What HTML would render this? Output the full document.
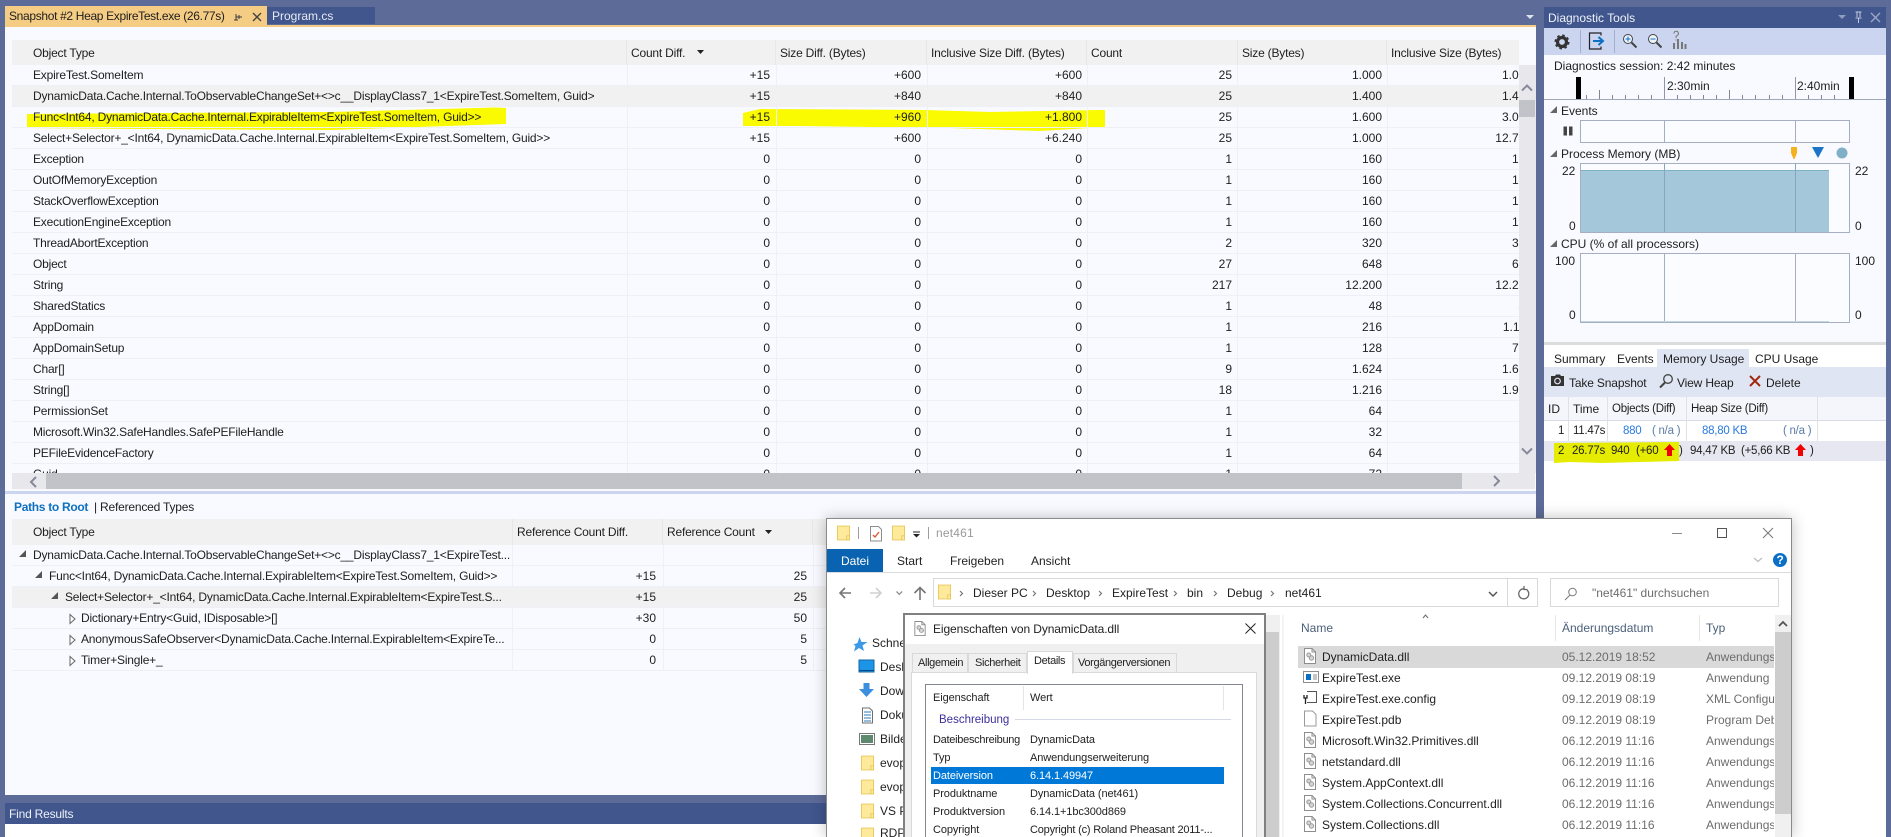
<!DOCTYPE html>
<html lang="en"><head><meta charset="utf-8"><title>Snapshot Heap</title>
<style>
html,body{margin:0;padding:0;width:1891px;height:837px;overflow:hidden;background:#5d6b99;font:12px "Liberation Sans",sans-serif;color:#1e1e1e}
div,span,svg{box-sizing:border-box}
#p{position:relative;width:1891px;height:837px;overflow:hidden;background:#5d6b99}
.b{position:absolute}
.t{position:absolute;white-space:nowrap;line-height:14px}
svg{position:absolute;overflow:visible}
.r{position:absolute;left:12px;width:1507px;height:21px;overflow:hidden;border-bottom:1px solid #eef0f6}
.r span{position:absolute;top:0;line-height:21px;white-space:nowrap}
.r .a{left:21px;letter-spacing:-.2px}.c1{right:749px}.c2{right:598px}.c3{right:437px}.c4{right:287px}.c5{right:137px}.c6{right:-13px}
.v{position:absolute;width:1px;background:#eef0f6}
.h{position:absolute;top:40px;height:25px;background:#f1f1f1;line-height:26px;white-space:nowrap;border-right:1px solid #e6e7ee;padding-left:4px;letter-spacing:-.2px}
.s{position:absolute;left:12px;width:814px;height:21px;border-bottom:1px solid #eef0f6}
.s span{position:absolute;top:0;line-height:20px;white-space:nowrap}
.s span:first-child{letter-spacing:-.2px}
.c{color:#6d6d6d}
.e{color:#222}
.d{font-size:11px;letter-spacing:-.1px}
.g{font-size:11.5px;letter-spacing:-.25px}
.k{font-size:11px;letter-spacing:-.35px}
</style></head><body><div id="p">

<!-- VS tab strip -->
<div class="b" style="left:5px;top:6px;width:262px;height:20px;background:#f5cc84"></div>
<div class="t" style="left:9px;top:9px;letter-spacing:-.33px">Snapshot #2 Heap ExpireTest.exe (26.77s)</div>
<svg style="left:233px;top:12px" width="10" height="10"><path d="M3 2v6M3 5h6M1 8h4M6 3v4" stroke="#3b3b3b" fill="none"/></svg>
<svg style="left:252px;top:12px" width="10" height="10"><path d="M1 1l8 8M9 1l-8 8" stroke="#444" stroke-width="1.4" fill="none"/></svg>
<div class="b" style="left:267px;top:7px;width:108px;height:17px;background:#40568d"></div>
<div class="t" style="left:272px;top:9px;color:#e6e9f3">Program.cs</div>
<svg style="left:1526px;top:15px" width="9" height="5"><path d="M0 0h8l-4 4z" fill="#dfe3f0"/></svg>
<div class="b" style="left:5px;top:25px;width:1531px;height:2px;background:#f5cc84"></div>

<!-- Main pane -->
<div class="b" style="left:5px;top:27px;width:1531px;height:768px;background:#f9faff"></div>

<svg style="left:0;top:0" width="1200" height="140"><path d="M27 114L160 113L330 112L495 107.500L506 108L506 124L330 130L150 129L27 128z" fill="#fafa00"/><path d="M743 113L760 109L925 110L990 112L1100 110L1105 110L1105 127L1040 131L950 128L800 126L743 126z" fill="#fafa00"/></svg>

<div class="b" style="left:12px;top:86px;width:1507px;height:21px;background:#f1f1f1"></div>

<div class="h" style="left:12px;width:615px;padding-left:21px">Object Type</div>
<div class="h" style="left:627px;width:149px">Count Diff.</div>
<svg style="left:697px;top:50px" width="8" height="5"><path d="M0 0h7l-3.500 4z" fill="#222"/></svg>
<div class="h" style="left:776px;width:151px">Size Diff. (Bytes)</div>
<div class="h" style="left:927px;width:160px">Inclusive Size Diff. (Bytes)</div>
<div class="h" style="left:1087px;width:151px">Count</div>
<div class="h" style="left:1238px;width:149px">Size (Bytes)</div>
<div class="h" style="left:1387px;width:132px;border-right:0">Inclusive Size (Bytes)</div>

<div class="v" style="left:627px;top:65px;height:408px"></div>
<div class="v" style="left:776px;top:65px;height:408px"></div>
<div class="v" style="left:927px;top:65px;height:408px"></div>
<div class="v" style="left:1087px;top:65px;height:408px"></div>
<div class="v" style="left:1237px;top:65px;height:408px"></div>
<div class="v" style="left:1387px;top:65px;height:408px"></div>

<div class="r" style="top:65px"><span class="a">ExpireTest.SomeItem</span><span class="c1">+15</span><span class="c2">+600</span><span class="c3">+600</span><span class="c4">25</span><span class="c5">1.000</span><span class="c6">1.000</span></div>
<div class="r" style="top:86px"><span class="a">DynamicData.Cache.Internal.ToObservableChangeSet+&lt;&gt;c__DisplayClass7_1&lt;ExpireTest.SomeItem, Guid&gt;</span><span class="c1">+15</span><span class="c2">+840</span><span class="c3">+840</span><span class="c4">25</span><span class="c5">1.400</span><span class="c6">1.400</span></div>
<div class="r" style="top:107px"><span class="a">Func&lt;Int64, DynamicData.Cache.Internal.ExpirableItem&lt;ExpireTest.SomeItem, Guid&gt;&gt;</span><span class="c1">+15</span><span class="c2">+960</span><span class="c3">+1.800</span><span class="c4">25</span><span class="c5">1.600</span><span class="c6">3.000</span></div>
<div class="r" style="top:128px"><span class="a">Select+Selector+_&lt;Int64, DynamicData.Cache.Internal.ExpirableItem&lt;ExpireTest.SomeItem, Guid&gt;&gt;</span><span class="c1">+15</span><span class="c2">+600</span><span class="c3">+6.240</span><span class="c4">25</span><span class="c5">1.000</span><span class="c6">12.720</span></div>
<div class="r" style="top:149px"><span class="a">Exception</span><span class="c1">0</span><span class="c2">0</span><span class="c3">0</span><span class="c4">1</span><span class="c5">160</span><span class="c6">160</span></div>
<div class="r" style="top:170px"><span class="a">OutOfMemoryException</span><span class="c1">0</span><span class="c2">0</span><span class="c3">0</span><span class="c4">1</span><span class="c5">160</span><span class="c6">160</span></div>
<div class="r" style="top:191px"><span class="a">StackOverflowException</span><span class="c1">0</span><span class="c2">0</span><span class="c3">0</span><span class="c4">1</span><span class="c5">160</span><span class="c6">160</span></div>
<div class="r" style="top:212px"><span class="a">ExecutionEngineException</span><span class="c1">0</span><span class="c2">0</span><span class="c3">0</span><span class="c4">1</span><span class="c5">160</span><span class="c6">160</span></div>
<div class="r" style="top:233px"><span class="a">ThreadAbortException</span><span class="c1">0</span><span class="c2">0</span><span class="c3">0</span><span class="c4">2</span><span class="c5">320</span><span class="c6">320</span></div>
<div class="r" style="top:254px"><span class="a">Object</span><span class="c1">0</span><span class="c2">0</span><span class="c3">0</span><span class="c4">27</span><span class="c5">648</span><span class="c6">648</span></div>
<div class="r" style="top:275px"><span class="a">String</span><span class="c1">0</span><span class="c2">0</span><span class="c3">0</span><span class="c4">217</span><span class="c5">12.200</span><span class="c6">12.200</span></div>
<div class="r" style="top:296px"><span class="a">SharedStatics</span><span class="c1">0</span><span class="c2">0</span><span class="c3">0</span><span class="c4">1</span><span class="c5">48</span><span class="c6">48</span></div>
<div class="r" style="top:317px"><span class="a">AppDomain</span><span class="c1">0</span><span class="c2">0</span><span class="c3">0</span><span class="c4">1</span><span class="c5">216</span><span class="c6">1.116</span></div>
<div class="r" style="top:338px"><span class="a">AppDomainSetup</span><span class="c1">0</span><span class="c2">0</span><span class="c3">0</span><span class="c4">1</span><span class="c5">128</span><span class="c6">728</span></div>
<div class="r" style="top:359px"><span class="a">Char[]</span><span class="c1">0</span><span class="c2">0</span><span class="c3">0</span><span class="c4">9</span><span class="c5">1.624</span><span class="c6">1.624</span></div>
<div class="r" style="top:380px"><span class="a">String[]</span><span class="c1">0</span><span class="c2">0</span><span class="c3">0</span><span class="c4">18</span><span class="c5">1.216</span><span class="c6">1.916</span></div>
<div class="r" style="top:401px"><span class="a">PermissionSet</span><span class="c1">0</span><span class="c2">0</span><span class="c3">0</span><span class="c4">1</span><span class="c5">64</span><span class="c6">64</span></div>
<div class="r" style="top:422px"><span class="a">Microsoft.Win32.SafeHandles.SafePEFileHandle</span><span class="c1">0</span><span class="c2">0</span><span class="c3">0</span><span class="c4">1</span><span class="c5">32</span><span class="c6">32</span></div>
<div class="r" style="top:443px"><span class="a">PEFileEvidenceFactory</span><span class="c1">0</span><span class="c2">0</span><span class="c3">0</span><span class="c4">1</span><span class="c5">64</span><span class="c6">64</span></div>
<div class="r" style="top:464px;height:9px;border:0"><span class="a">Guid</span><span class="c1">0</span><span class="c2">0</span><span class="c3">0</span><span class="c4">1</span><span class="c5">72</span><span class="c6">92</span></div>

<!-- Scrollbars -->
<div class="b" style="left:1519px;top:65px;width:17px;height:408px;background:#e8e8ec"></div>
<div class="b" style="left:1519px;top:100px;width:16px;height:17px;background:#c2c3c9"></div>
<svg style="left:1521px;top:83px" width="12" height="9"><path d="M1 7.500L6 2.500L11 7.500" stroke="#868999" stroke-width="2" fill="none"/></svg>
<svg style="left:1521px;top:447px" width="12" height="9"><path d="M1 1.500L6 6.500L11 1.500" stroke="#868999" stroke-width="2" fill="none"/></svg>
<div class="b" style="left:12px;top:473px;width:1523px;height:16px;background:#e8e8ec"></div>
<div class="b" style="left:46px;top:473px;width:1416px;height:16px;background:#c2c3c9"></div>
<svg style="left:29px;top:476px" width="9" height="12"><path d="M7 1L2 6L7 11" stroke="#868999" stroke-width="2" fill="none"/></svg>
<svg style="left:1492px;top:475px" width="9" height="12"><path d="M2 1L7 6L2 11" stroke="#868999" stroke-width="2" fill="none"/></svg>
<div class="b" style="left:5px;top:491px;width:1531px;height:3px;background:#ccd5f0"></div>

<!-- Lower pane -->
<div class="t" style="left:14px;top:500px;color:#0e70c0;font-weight:bold;letter-spacing:-.3px">Paths to Root</div>
<div class="t" style="left:94px;top:500px;letter-spacing:-.2px">| Referenced Types</div>
<div class="h" style="left:12px;top:519px;height:26px;width:501px;padding-left:21px;line-height:27px">Object Type</div>
<div class="h" style="left:513px;top:519px;height:26px;width:150px;line-height:27px">Reference Count Diff.</div>
<div class="h" style="left:663px;top:519px;height:26px;width:150px;line-height:27px">Reference Count</div>
<div class="h" style="left:813px;top:519px;height:26px;width:20px;line-height:27px"></div>
<svg style="left:765px;top:530px" width="8" height="5"><path d="M0 0h7l-3.500 4z" fill="#222"/></svg>
<div class="b" style="left:12px;top:587px;width:814px;height:21px;background:#f1f1f1"></div>
<div class="s" style="top:545px"><span style="left:21px">DynamicData.Cache.Internal.ToObservableChangeSet+&lt;&gt;c__DisplayClass7_1&lt;ExpireTest...</span></div>
<div class="s" style="top:566px"><span style="left:37px">Func&lt;Int64, DynamicData.Cache.Internal.ExpirableItem&lt;ExpireTest.SomeItem, Guid&gt;&gt;</span><span style="right:170px">+15</span><span style="right:19px">25</span></div>
<div class="s" style="top:587px"><span style="left:53px">Select+Selector+_&lt;Int64, DynamicData.Cache.Internal.ExpirableItem&lt;ExpireTest.S...</span><span style="right:170px">+15</span><span style="right:19px">25</span></div>
<div class="s" style="top:608px"><span style="left:69px">Dictionary+Entry&lt;Guid, IDisposable&gt;[]</span><span style="right:170px">+30</span><span style="right:19px">50</span></div>
<div class="s" style="top:629px"><span style="left:69px">AnonymousSafeObserver&lt;DynamicData.Cache.Internal.ExpirableItem&lt;ExpireTe...</span><span style="right:170px">0</span><span style="right:19px">5</span></div>
<div class="s" style="top:650px"><span style="left:69px">Timer+Single+_</span><span style="right:170px">0</span><span style="right:19px">5</span></div>
<div class="v" style="left:512px;top:545px;height:125px"></div>
<div class="v" style="left:663px;top:545px;height:125px"></div>
<div class="v" style="left:813px;top:545px;height:125px"></div>
<svg style="left:0;top:540px" width="90" height="130">
<path d="M26 10v7h-7zM42 31v7h-7zM58 52v7h-7z" fill="#555"/>
<path d="M70 74.500v9l5-4.500zM70 95.500v9l5-4.500zM70 116.500v9l5-4.500z" fill="#fff" stroke="#666"/>
</svg>

<div class="b" style="left:0;top:795px;width:1536px;height:8px;background:#5d6b99"></div>
<div class="b" style="left:5px;top:803px;width:1531px;height:21px;background:#40568d"></div>
<div class="t" style="left:9px;top:807px;color:#eef1f8;letter-spacing:-.2px">Find Results</div>
<div class="b" style="left:5px;top:824px;width:1531px;height:13px;background:#fff"></div>

<!-- Diagnostic Tools -->
<div class="b" style="left:1544px;top:7px;width:342px;height:830px;background:#f9faff"></div>
<div class="b" style="left:1544px;top:7px;width:342px;height:21px;background:#40568d"></div>
<div class="t" style="left:1548px;top:11px;color:#eef1f8">Diagnostic Tools</div>
<svg style="left:1838px;top:12px" width="44" height="12">
<path d="M0 3h8l-4 4z" fill="#8f9cc0"/>
<path d="M19 0v5M22 0v5M17.500 6h6M20.500 6v5M17.500 0h6" stroke="#c3cbe0" fill="none"/>
<path d="M33 1l9 9M42 1l-9 9" stroke="#9ea9c8" stroke-width="1.300"/>
</svg>
<div class="b" style="left:1544px;top:28px;width:342px;height:27px;background:#ccd5f0"></div>
<svg style="left:1544px;top:28px" width="160" height="27">
<circle cx="18" cy="14" r="4.500" fill="none" stroke="#333" stroke-width="3.200"/>
<circle cx="18" cy="14" r="6.500" fill="none" stroke="#333" stroke-width="2" stroke-dasharray="2.500 2.600"/>
<path d="M36.500 2v23M70.500 2v23" stroke="#9fb0d0"/>
<path d="M57 7.500V5H45.500v16H57v-2.500" fill="none" stroke="#222" stroke-width="1.200"/>
<path d="M49 13h9M54.500 9l4.500 4-4.500 4" fill="none" stroke="#0e70c0" stroke-width="2"/>
<circle cx="84" cy="11" r="4.500" fill="#eef2fb" stroke="#444"/><path d="M87.500 14.500l5 5" stroke="#444" stroke-width="2"/><path d="M81.500 11h5M84 8.500v5" stroke="#0e70c0"/>
<circle cx="109" cy="11" r="4.500" fill="#eef2fb" stroke="#444"/><path d="M112.500 14.500l5 5" stroke="#444" stroke-width="2"/><path d="M106.500 11h5" stroke="#0e70c0"/>
<path d="M130 5.500a2.200 2.200 0 1 1 3 2l-1 1v1.500M132 11.500v1" fill="none" stroke="#777"/>
<path d="M129 15h2v6h-2zM133 11h2v10h-2zM137 14h2v7h-2zM140.500 16h2v5h-2z" fill="#777"/>
</svg>
<div class="t" style="left:1554px;top:59px">Diagnostics session: 2:42 minutes</div>

<svg style="left:1544px;top:77px" width="342" height="24">
<path d="M0 22.500h342" stroke="#a0a7b8"/>
<rect x="32" y="0" width="5" height="22" fill="#000"/><rect x="305" y="0" width="5" height="22" fill="#000"/>
<path d="M120.500 0v22M251.500 0v22" stroke="#8e96a8"/>
<path d="M42.500 18v4M55.500 13v9M68.500 18v4M81.500 18v4M94.500 18v4M107.500 18v4M133.500 18v4M146.500 18v4M159.500 18v4M172.500 18v4M185.500 13v9M198.500 18v4M211.500 18v4M225.500 18v4M238.500 18v4M264.500 18v4M277.500 18v4M290.500 18v4" stroke="#7f8594"/>
</svg>
<div class="t" style="left:1667px;top:79px">2:30min</div>
<div class="t" style="left:1797px;top:79px">2:40min</div>

<svg style="left:1544px;top:100px" width="342" height="240">
<path d="M13 6v7h-7zM13 50v7h-7zM13 140v7h-7z" fill="#666"/>
<rect x="36.500" y="20.500" width="269" height="22" fill="#fbfcff" stroke="#a6afc1"/>
<path d="M120.500 20v22M251.500 20v22" stroke="#a6afc1"/>
<path d="M19.500 26.500h3.500v9h-3.500zM25 26.500h3.500v9H25z" fill="#444"/>
<rect x="36.500" y="63.500" width="269" height="69" fill="#fbfcff" stroke="#a6afc1"/>
<rect x="37" y="70" width="248" height="62" fill="#a4c7da"/>
<path d="M37 70.500h248" stroke="#7fb0c8"/>
<path d="M120.500 63v69M251.500 63v69" stroke="#88a6bd"/>
<path d="M247 47h6v6l-2.500 6h-1l-2.500-6z" fill="#f5b21f"/>
<path d="M268 47h12l-6 11z" fill="#1b74c6"/>
<circle cx="298" cy="53" r="5.500" fill="#7fb0c8"/>
<rect x="36.500" y="153.500" width="269" height="69" fill="#fbfcff" stroke="#a6afc1"/>
<path d="M120.500 153v69M251.500 153v69" stroke="#a6afc1"/>
<path d="M37 221.500h248" stroke="#c3d6e2"/>
</svg>
<div class="t" style="left:1561px;top:104px">Events</div>
<div class="t" style="left:1561px;top:147px">Process Memory (MB)</div>
<div class="t" style="left:1561px;top:237px">CPU (% of all processors)</div>
<div class="t" style="left:1562px;top:164px">22</div><div class="t" style="left:1855px;top:164px">22</div>
<div class="t" style="left:1569px;top:219px">0</div><div class="t" style="left:1855px;top:219px">0</div>
<div class="t" style="left:1555px;top:254px">100</div><div class="t" style="left:1855px;top:254px">100</div>
<div class="t" style="left:1569px;top:308px">0</div><div class="t" style="left:1855px;top:308px">0</div>

<div class="b" style="left:1544px;top:342px;width:342px;height:3px;background:#dcdcdc"></div>
<div class="b" style="left:1544px;top:345px;width:342px;height:492px;background:#fff"></div>
<div class="b" style="left:1657px;top:349px;width:92px;height:18px;background:#dfe5f2"></div>
<div class="t" style="left:1554px;top:352px">Summary</div>
<div class="t" style="left:1617px;top:352px">Events</div>
<div class="t" style="left:1663px;top:352px">Memory Usage</div>
<div class="t" style="left:1755px;top:352px">CPU Usage</div>
<div class="b" style="left:1544px;top:367px;width:342px;height:30px;background:#dfe5f2"></div>
<svg style="left:1550px;top:372px" width="220" height="20">
<path d="M1 4h4l1-1.500h4L11 4h3v10H1z" fill="#333"/><circle cx="7.500" cy="9" r="2.800" fill="none" stroke="#dfe5f2" stroke-width="1.200"/>
<circle cx="118" cy="7" r="4.300" fill="none" stroke="#444" stroke-width="1.300"/><path d="M115 10.500l-5 5" stroke="#444" stroke-width="2"/>
<path d="M200 4l10 10M210 4l-10 10" stroke="#a1260d" stroke-width="2"/>
</svg>
<div class="t" style="left:1569px;top:376px;letter-spacing:-.15px">Take Snapshot</div>
<div class="t" style="left:1677px;top:376px;letter-spacing:-.15px">View Heap</div>
<div class="t" style="left:1766px;top:376px">Delete</div>
<div class="b" style="left:1544px;top:397px;width:342px;height:24px;background:#f5f6fb;border-bottom:1px solid #d9dbe2"></div>
<div class="b" style="left:1568px;top:397px;width:1px;height:64px;background:#dfe1e8"></div>
<div class="b" style="left:1607px;top:397px;width:1px;height:64px;background:#dfe1e8"></div>
<div class="b" style="left:1686px;top:397px;width:1px;height:64px;background:#dfe1e8"></div>
<div class="b" style="left:1817px;top:397px;width:1px;height:64px;background:#dfe1e8"></div>
<div class="t" style="left:1548px;top:402px">ID</div>
<div class="t" style="left:1573px;top:402px">Time</div>
<div class="t g" style="left:1612px;top:402px">Objects (Diff)</div>
<div class="t g" style="left:1691px;top:402px">Heap Size (Diff)</div>
<div class="t g" style="left:1558px;top:424px">1</div>
<div class="t g" style="left:1573px;top:424px">11.47s</div>
<div class="t g" style="left:1623px;top:424px;color:#2a7ae0">880</div>
<div class="t g" style="left:1652px;top:424px;color:#5b7ba8">( n/a )</div>
<div class="t g" style="left:1702px;top:424px;color:#2a7ae0">88,80 KB</div>
<div class="t g" style="left:1783px;top:424px;color:#5b7ba8">( n/a )</div>
<div class="b" style="left:1544px;top:441px;width:342px;height:20px;background:#e6e7f0"></div>
<svg style="left:1550px;top:440px" width="140" height="26"><path d="M4 3L129 2L129 21L90 22L52 23L20 22L4 23z" fill="#e6ec00"/></svg>
<div class="t g" style="left:1558px;top:444px">2</div>
<div class="t g" style="left:1572px;top:444px">26.77s</div>
<div class="t g" style="left:1611px;top:444px">940</div>
<div class="t g" style="left:1636px;top:444px">(+60</div>
<div class="t g" style="left:1679px;top:444px">)</div>
<div class="t g" style="left:1690px;top:444px">94,47 KB</div>
<div class="t g" style="left:1741px;top:444px">(+5,66 KB</div>
<div class="t g" style="left:1810px;top:444px">)</div>
<svg style="left:1664px;top:444px" width="150" height="14">
<path d="M5.500 0L11 6H8v6H3V6H0z" fill="#f00000"/>
<path d="M136.500 0L142 6H139v6H134V6H131z" fill="#f00000"/>
</svg>

<!-- Explorer window -->
<div class="b" style="left:826px;top:518px;width:966px;height:319px;background:#fff;border:1px solid #8a8a8a;border-bottom:0;box-shadow:0 0 14px rgba(0,0,0,.25)"></div>
<svg style="left:0;top:0;width:1891px;height:837px" width="1891" height="837">
<defs>
<symbol id="fo" viewBox="0 0 14 16"><path d="M.5 .5h13v15H.5z" fill="#ffe99b" stroke="#e8c75e"/><path d="M10.500 11h3v4.500h-3z" fill="#ffe99b" stroke="#e8c75e"/></symbol>
<symbol id="dl" viewBox="0 0 12 16"><path d="M.5 .5h7.500l3.500 3.500v11.500H.5z" fill="#fff" stroke="#8d8d8d"/><path d="M8 .5v3.500h3.500" fill="none" stroke="#8d8d8d"/><circle cx="4.800" cy="7" r="2" fill="#d5d5d5" stroke="#9a9a9a"/><circle cx="7.500" cy="10" r="2.200" fill="#d5d5d5" stroke="#9a9a9a"/></symbol>
</defs>
<use href="#fo" x="837" y="525" width="13" height="16"/>
<path d="M858.500 527v12" stroke="#9d9d9d"/>
<path d="M870.500 526.500h8l3 3v11.500h-11z" fill="#fff" stroke="#8d8d8d"/><path d="M873 535l2 2 4-5" fill="none" stroke="#e0502b" stroke-width="1.300"/>
<use href="#fo" x="892" y="525" width="13" height="16"/>
<path d="M913 532h7" stroke="#222"/><path d="M913 534h7l-3.500 3.500z" fill="#222"/>
<path d="M928.500 527v12" stroke="#9d9d9d"/>
<path d="M851 593h-11M845 588l-5 5 5 5" fill="none" stroke="#767676" stroke-width="1.600"/>
<path d="M870 593h11M876 588l5 5-5 5" fill="none" stroke="#d0d0d0" stroke-width="1.600"/>
<path d="M896.500 591.500l2.800 2.800 2.800-2.800" fill="none" stroke="#8f8f8f" stroke-width="1.300"/>
<path d="M920 600v-13M914.500 593l5.500-5.500 5.500 5.500" fill="none" stroke="#767676" stroke-width="1.600"/>
<use href="#fo" x="938" y="584" width="13" height="16"/>
<path d="M960 591l2.500 2.500-2.500 2.500M1033 591l2.500 2.500-2.500 2.500M1099 591l2.500 2.500-2.500 2.500M1174 591l2.500 2.500-2.500 2.500M1214 591l2.500 2.500-2.500 2.500M1271 591l2.500 2.500-2.500 2.500" fill="none" stroke="#777" stroke-width="1.200"/>
<path d="M1489 592l4 4 4-4" fill="none" stroke="#555" stroke-width="1.500"/>
<path d="M1527 590a5 5 0 1 1-3-1.200M1524 586v3.500h3.500" fill="none" stroke="#666" stroke-width="1.300"/>
<circle cx="1572.500" cy="592" r="3.800" fill="none" stroke="#777"/><path d="M1570 595l-5 5" stroke="#777"/>
<path d="M1672 533.500h10" stroke="#8a8a8a"/>
<rect x="1717.500" y="528.500" width="9" height="9" fill="none" stroke="#555"/>
<path d="M1763 528l10 10M1773 528l-10 10" stroke="#777"/>
<path d="M1754 558l4 3.500 4-3.500" fill="none" stroke="#bbb" stroke-width="1.200"/>
<circle cx="1780" cy="560" r="7" fill="#0a6fc7"/>
<path d="M1425 619l-2.500-3-2.500 3" transform="translate(3 -1)" fill="none" stroke="#666"/>
<path d="M1555.500 615v26M1699.500 615v26M1283 615v222" stroke="#e8e8e8"/>
</svg>
<div class="t" style="left:1776.500px;top:553px;color:#fff;font-weight:bold">?</div>
<div class="t" style="left:936px;top:526px;color:#9a9a9a;letter-spacing:.2px">net461</div>
<div class="b" style="left:827px;top:549px;width:56px;height:23px;background:#0a63b0"></div>
<div class="t" style="left:841px;top:554px;color:#fff">Datei</div>
<div class="t e" style="left:897px;top:554px">Start</div>
<div class="t e" style="left:950px;top:554px">Freigeben</div>
<div class="t e" style="left:1031px;top:554px">Ansicht</div>
<div class="b" style="left:827px;top:572px;width:964px;height:1px;background:#dadbdc"></div>
<div class="b" style="left:933px;top:578px;width:605px;height:29px;border:1px solid #d9d9d9"></div>
<div class="b" style="left:1507px;top:578px;width:1px;height:29px;background:#d9d9d9"></div>
<div class="b" style="left:1550px;top:578px;width:229px;height:29px;border:1px solid #d9d9d9"></div>
<div class="t e" style="left:973px;top:586px">Dieser PC</div>
<div class="t e" style="left:1046px;top:586px">Desktop</div>
<div class="t e" style="left:1112px;top:586px">ExpireTest</div>
<div class="t e" style="left:1187px;top:586px">bin</div>
<div class="t e" style="left:1227px;top:586px">Debug</div>
<div class="t e" style="left:1285px;top:586px">net461</div>
<div class="t" style="left:1592px;top:586px;color:#6d6d6d">"net461" durchsuchen</div>
<div class="t" style="left:1301px;top:621px;color:#4c607a">Name</div>
<div class="t" style="left:1562px;top:621px;color:#4c607a">Änderungsdatum</div>
<div class="t" style="left:1706px;top:621px;color:#4c607a">Typ</div>
<div class="b" style="left:1298px;top:646px;width:476px;height:22px;background:#d9d9d9"></div>
<div class="b" style="left:1775px;top:615px;width:16px;height:222px;background:#f0f0f0"></div>
<div class="b" style="left:1775px;top:632px;width:16px;height:182px;background:#cdcdcd"></div>
<svg style="left:1777px;top:620px" width="12" height="8"><path d="M2 6l4-4 4 4" fill="none" stroke="#555" stroke-width="1.800"/></svg>
<div class="b" style="left:1266px;top:615px;width:14px;height:222px;background:#f0f0f0"></div>
<div class="b" style="left:1266px;top:632px;width:13px;height:205px;background:#cdcdcd"></div>
<svg style="left:0;top:0" width="1800" height="837">
<use href="#dl" x="1304" y="648" width="12" height="16"/>
<rect x="1303.500" y="671.500" width="15" height="11" fill="#fff" stroke="#8d8d8d"/><rect x="1306" y="674" width="5" height="6" fill="#0a6fc7"/><path d="M1313 675h4M1313 677h4M1313 679h4" stroke="#8d8d8d"/>
<path d="M1307 691.500h9.500v11h-9.500" fill="#fff" stroke="#555"/><path d="M1304 695v3h3v-3M1305.500 698v6" fill="none" stroke="#222" stroke-width="1.300"/>
<path d="M1304.500 691h8l3.500 3.500v11.500h-11.500z" transform="translate(0 20)" fill="#fff" stroke="#9a9a9a"/>
<use href="#dl" x="1304" y="732" width="12" height="16"/>
<use href="#dl" x="1304" y="753" width="12" height="16"/>
<use href="#dl" x="1304" y="774" width="12" height="16"/>
<use href="#dl" x="1304" y="795" width="12" height="16"/>
<use href="#dl" x="1304" y="816" width="12" height="16"/>
<path d="M860 633l4-1.500 2-6 2 5h6l-5 3.500 1.500 5.500-5-3-5 3.500 1.500-5.500z" transform="translate(-6.500 11.500)" fill="#3b99e6"/>
<rect x="859" y="660" width="15" height="12" fill="#1c95e8" stroke="#1565a0"/><path d="M859 670.500h15" stroke="#0b4a80"/>
<path d="M863.500 683h6v6h4.500l-7.500 8-7.500-8h4.500z" fill="#3a8fdf"/>
<path d="M862.500 708h7l3 3v12h-10z" fill="#fff" stroke="#6f6f6f"/><path d="M864 712h7M864 715h7M864 718h7M864 721h7" stroke="#2a7ab8"/>
<rect x="859.500" y="733.500" width="15" height="11" fill="#fff" stroke="#777"/><rect x="861" y="735" width="12" height="8" fill="#5d8a6e"/>
<use href="#fo" x="861" y="755" width="13" height="16"/>
<use href="#fo" x="861" y="779" width="13" height="16"/>
<use href="#fo" x="861" y="803" width="13" height="16"/>
<use href="#fo" x="861" y="827" width="13" height="16"/>
</svg>
<div class="t" style="left:1322px;top:650px">DynamicData.dll</div><div class="t c" style="left:1562px;top:650px">05.12.2019 18:52</div>
<div class="t" style="left:1322px;top:671px">ExpireTest.exe</div><div class="t c" style="left:1562px;top:671px">09.12.2019 08:19</div>
<div class="t" style="left:1322px;top:692px">ExpireTest.exe.config</div><div class="t c" style="left:1562px;top:692px">09.12.2019 08:19</div>
<div class="t" style="left:1322px;top:713px">ExpireTest.pdb</div><div class="t c" style="left:1562px;top:713px">09.12.2019 08:19</div>
<div class="t" style="left:1322px;top:734px">Microsoft.Win32.Primitives.dll</div><div class="t c" style="left:1562px;top:734px">06.12.2019 11:16</div>
<div class="t" style="left:1322px;top:755px">netstandard.dll</div><div class="t c" style="left:1562px;top:755px">06.12.2019 11:16</div>
<div class="t" style="left:1322px;top:776px">System.AppContext.dll</div><div class="t c" style="left:1562px;top:776px">06.12.2019 11:16</div>
<div class="t" style="left:1322px;top:797px">System.Collections.Concurrent.dll</div><div class="t c" style="left:1562px;top:797px">06.12.2019 11:16</div>
<div class="t" style="left:1322px;top:818px">System.Collections.dll</div><div class="t c" style="left:1562px;top:818px">06.12.2019 11:16</div>
<div class="b" style="left:1706px;top:646px;width:68px;height:191px;overflow:hidden;color:#6d6d6d">
<div class="t" style="left:0;top:4px">Anwendungserw</div>
<div class="t" style="left:0;top:25px">Anwendung</div>
<div class="t" style="left:0;top:46px">XML Configuration</div>
<div class="t" style="left:0;top:67px">Program Debug</div>
<div class="t" style="left:0;top:88px">Anwendungserw</div>
<div class="t" style="left:0;top:109px">Anwendungserw</div>
<div class="t" style="left:0;top:130px">Anwendungserw</div>
<div class="t" style="left:0;top:151px">Anwendungserw</div>
<div class="t" style="left:0;top:172px">Anwendungserw</div>
</div>
<div class="t e" style="left:872px;top:636px">Schnellzugriff</div>
<div class="t e" style="left:880px;top:660px">Desktop</div>
<div class="t e" style="left:880px;top:684px">Downloads</div>
<div class="t e" style="left:880px;top:708px">Dokumente</div>
<div class="t e" style="left:880px;top:732px">Bilder</div>
<div class="t e" style="left:880px;top:756px">evoption</div>
<div class="t e" style="left:880px;top:780px">evoption</div>
<div class="t e" style="left:880px;top:804px">VS Projekte</div>
<div class="t e" style="left:880px;top:826px">RDP</div>

<!-- Properties dialog -->
<div class="b" style="left:903px;top:613px;width:363px;height:224px;background:#f0f0f0;border:2px solid #808080;border-bottom:0"></div>
<div class="b" style="left:905px;top:615px;width:359px;height:29px;background:#fff"></div>
<svg style="left:914px;top:621px" width="12" height="15"><use href="#dl" width="12" height="15"/></svg>
<div class="t e" style="left:933px;top:622px;letter-spacing:-.1px">Eigenschaften von DynamicData.dll</div>
<svg style="left:1245px;top:623px" width="11" height="11"><path d="M.5 .5l10 10M10.500 .5l-10 10" stroke="#222"/></svg>
<div class="b" style="left:911px;top:672px;width:346px;height:165px;background:#fff;border:1px solid #d9d9d9;border-bottom:0"></div>
<div class="b" style="left:912px;top:653px;width:56px;height:20px;background:#f0f0f0;border:1px solid #d9d9d9"></div>
<div class="b" style="left:968px;top:653px;width:59px;height:20px;background:#f0f0f0;border:1px solid #d9d9d9"></div>
<div class="b" style="left:1073px;top:653px;width:104px;height:20px;background:#f0f0f0;border:1px solid #d9d9d9"></div>
<div class="b" style="left:1027px;top:651px;width:46px;height:23px;background:#fff;border:1px solid #d9d9d9;border-bottom:0"></div>
<div class="t e k" style="left:918px;top:656px">Allgemein</div>
<div class="t e k" style="left:975px;top:656px">Sicherheit</div>
<div class="t e k" style="left:1034px;top:654px">Details</div>
<div class="t e k" style="left:1078px;top:656px">Vorgängerversionen</div>
<div class="b" style="left:925px;top:684px;width:318px;height:153px;background:#fff;border:1px solid #828790;border-bottom:0"></div>
<div class="b" style="left:1023px;top:686px;width:1px;height:24px;background:#e5e5e5"></div>
<div class="b" style="left:1223px;top:686px;width:1px;height:24px;background:#e5e5e5"></div>
<div class="t e d" style="left:933px;top:691px">Eigenschaft</div>
<div class="t e d" style="left:1030px;top:691px">Wert</div>
<div class="t" style="left:939px;top:713px;color:#3c2f9e;font-size:11.5px">Beschreibung</div>
<div class="b" style="left:1015px;top:719px;width:216px;height:1px;background:#d5d9e5"></div>
<div class="b" style="left:931px;top:767px;width:293px;height:17px;background:#0078d7"></div>
<div class="t e d" style="left:933px;top:733px;letter-spacing:-.28px">Dateibeschreibung</div><div class="t e d" style="left:1030px;top:733px">DynamicData</div>
<div class="t e d" style="left:933px;top:751px">Typ</div><div class="t e d" style="left:1030px;top:751px">Anwendungserweiterung</div>
<div class="t d" style="left:933px;top:769px;color:#fff">Dateiversion</div><div class="t d" style="left:1030px;top:769px;color:#fff">6.14.1.49947</div>
<div class="t e d" style="left:933px;top:787px">Produktname</div><div class="t e d" style="left:1030px;top:787px">DynamicData (net461)</div>
<div class="t e d" style="left:933px;top:805px">Produktversion</div><div class="t e d" style="left:1030px;top:805px">6.14.1+1bc300d869</div>
<div class="t e d" style="left:933px;top:823px">Copyright</div><div class="t e d" style="left:1030px;top:823px;letter-spacing:-.2px">Copyright (c) Roland Pheasant 2011-...</div>

</div></body></html>
